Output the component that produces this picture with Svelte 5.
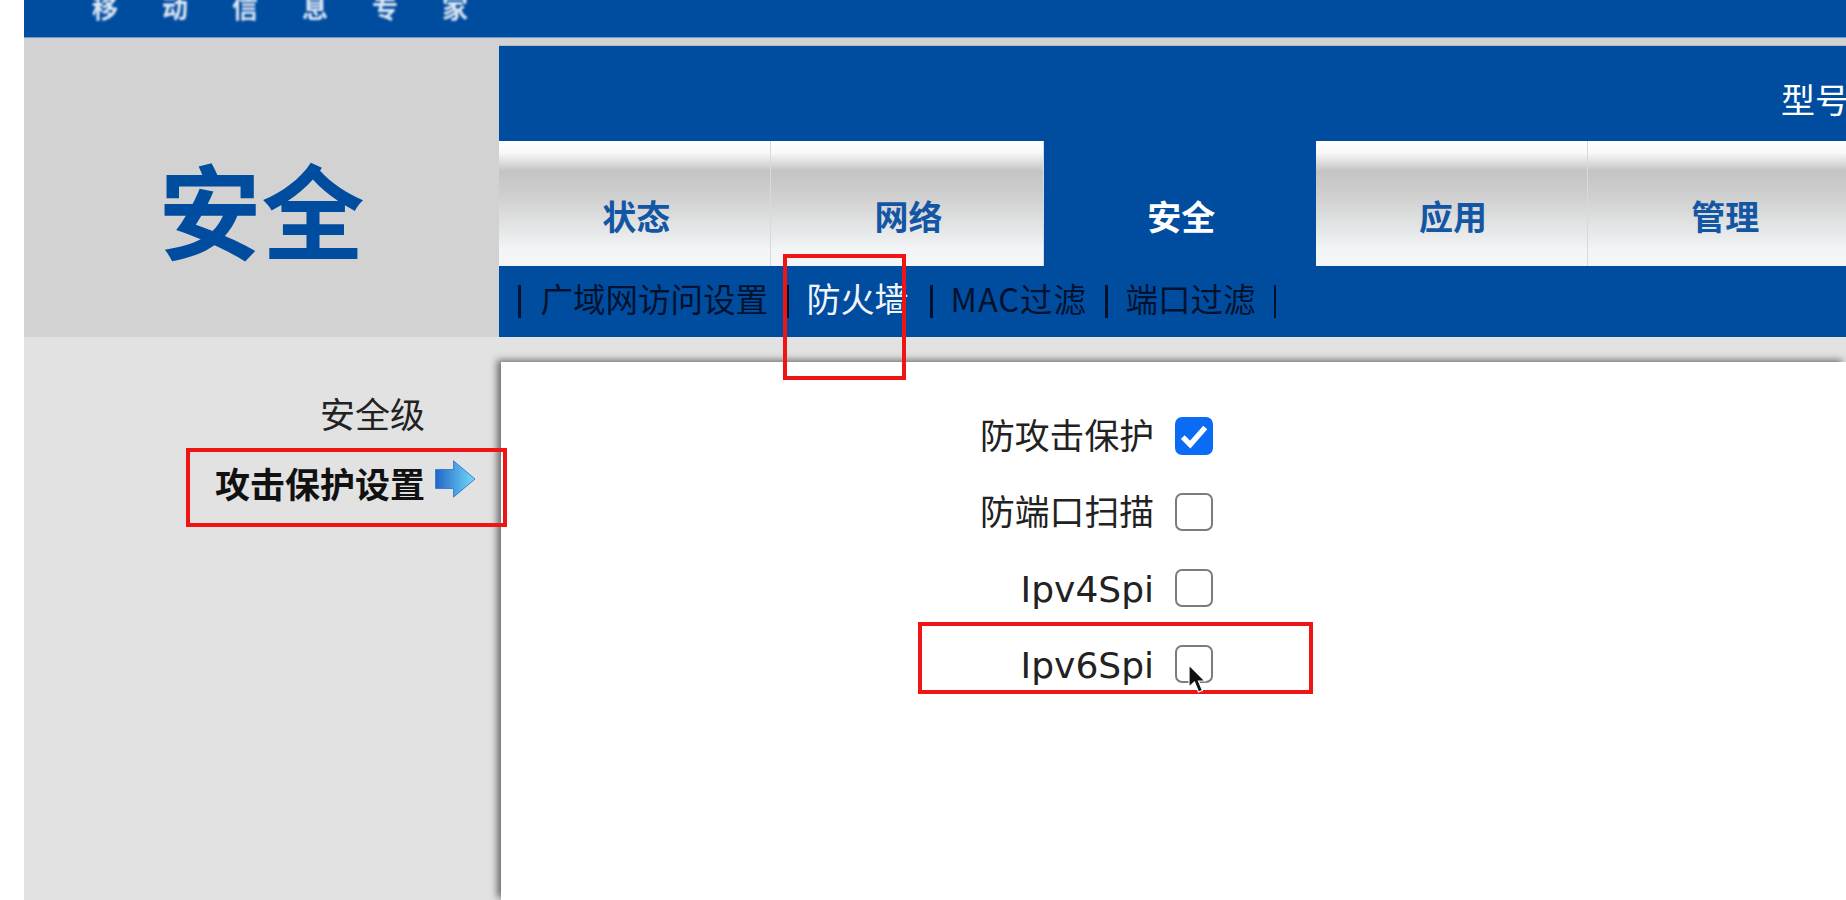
<script>
  const brandChars = ['移', '动', '信', '息', '专', '家'];
  const tabs = [
    { name: '状态' },
    { name: '网络' },
    { name: '安全', active: true },
    { name: '应用' },
    { name: '管理' }
  ];
  const subLinks = [
    { name: '广域网访问设置' },
    { name: '防火墙', active: true },
    { name: 'MAC过滤', wide: true },
    { name: '端口过滤' }
  ];
  const options = [
    { label: '防攻击保护', checked: true },
    { label: '防端口扫描', checked: false },
    { label: 'Ipv4Spi', checked: false, latin: true },
    { label: 'Ipv6Spi', checked: false, latin: true }
  ];
</script>

<div class="page">
  <header class="topbar">
    {#each brandChars as ch}
      <span>{ch}</span>
    {/each}
  </header>

  <section class="head">
    <h1 class="title">安全</h1>
    <div class="head-main">
      <div class="model">型号</div>
      <nav class="tabs">
        {#each tabs as tab}
          <div class="tab" class:active={tab.active}>{tab.name}</div>
        {/each}
      </nav>
      <nav class="subnav">
        <i class="sep first"></i>
        {#each subLinks as link}
          <span class="sublink" class:active={link.active} class:wide={link.wide}>{link.name}</span>
          <i class="sep"></i>
        {/each}
      </nav>
    </div>
  </section>

  <section class="body">
    <aside class="side">
      <div class="side-item">安全级</div>
      <div class="side-item current">
        攻击保护设置
        <svg class="arrow" width="41" height="38" viewBox="0 0 41 38">
          <defs>
            <linearGradient id="arrowFill" x1="0" x2="1" y1="0" y2="0">
              <stop offset="0" stop-color="#2166c8" />
              <stop offset="1" stop-color="#74dcf8" />
            </linearGradient>
          </defs>
          <path d="M0.5 9.5H18.5V0.8L40 19 18.5 37.2V28.5H0.5Z" fill="url(#arrowFill)" stroke="#3d7fd0" />
        </svg>
      </div>
    </aside>
    <main class="content">
      <div class="form">
        {#each options as opt}
          <span class="label" class:latin={opt.latin}>{opt.label}</span>
          <span class="box" class:on={opt.checked}>
            {#if opt.checked}
              <svg width="30" height="26" viewBox="0 0 28 24">
                <path d="M3.5 13L10.5 20 24.5 4" fill="none" stroke="#fff" stroke-width="5" />
              </svg>
            {/if}
          </span>
        {/each}
      </div>
    </main>
  </section>

  <!-- annotation boxes drawn over the screenshot -->
  <div class="mark mark-nav"></div>
  <div class="mark mark-side"></div>
  <div class="mark mark-row"></div>

  <svg class="cursor" width="18" height="30" viewBox="0 0 18 30">
    <path d="M1 1V23L6.5 18 10.5 28 14.5 26.4 10.5 17H17Z" fill="#111" stroke="#fff" stroke-width="1.2" />
  </svg>
</div>

<style>
  :global(body) {
    margin: 0;
    background: #fff;
  }

  .page {
    position: relative;
    width: 1846px;
    height: 900px;
    overflow: hidden;
    box-sizing: border-box;
    padding-left: 24px;
    font-family: "DejaVu Sans", "Noto Sans CJK SC", sans-serif;
  }

  .topbar {
    height: 38px;
    box-sizing: border-box;
    background: #004da0;
    border-bottom: 1px solid #6e9ad0;
    overflow: hidden;
    display: flex;
    gap: 44px;
    padding-left: 68px;
    font: bold 26px/26px "Noto Sans CJK SC", sans-serif;
    color: #dfe9f5;
  }

  .topbar span {
    margin-top: -6px;
    filter: blur(0.8px);
  }

  .head {
    display: flex;
    height: 299px;
    background: #d2d2d2;
  }

  .title {
    flex: none;
    width: 475px;
    margin: 0;
    text-align: center;
    font: bold 103px/340px "Noto Sans CJK SC", sans-serif;
    color: #004da0;
  }

  .head-main {
    flex: none;
    width: 1400px;
    margin-top: 7px;
    background: #004da0;
    border-top: 1px solid #b5bcc6;
    display: flex;
    flex-direction: column;
  }

  .model {
    height: 95px;
    padding-left: 1282px;
    font: 34px/106px "Noto Sans CJK SC", sans-serif;
    color: #fff;
  }

  .tabs {
    display: flex;
    height: 125px;
  }

  .tab {
    flex: none;
    width: 272.3px;
    box-sizing: border-box;
    padding-left: 3px;
    border-right: 1px solid #d3dbe2;
    background: linear-gradient(#ffffff 0, #f8f8f8 12px, #c4c4c4 30px, #cfcfcf 55px, #f3f5f6 110px);
    color: #1356a3;
    font: bold 34px/150px "Noto Sans CJK SC", sans-serif;
    text-align: center;
  }

  .tab.active {
    background: #004da0;
    border-right: 0;
    color: #fff;
  }

  .subnav {
    height: 70px;
    display: flex;
    align-items: center;
    padding-left: 19px;
    gap: 18px;
    font: 32.5px/70px "Noto Sans CJK SC", sans-serif;
    color: #02122e;
  }

  .sublink {
    margin-top: -7px;
  }

  .sublink.wide {
    letter-spacing: 1px;
  }

  .sublink.active {
    color: #f1f5fb;
    font-size: 34px;
    margin-right: 3.5px;
  }

  .sep {
    width: 2.5px;
    height: 33px;
    background: #02122e;
  }

  .sep.first {
    margin-right: 2px;
  }

  .body {
    display: flex;
    height: 563px;
    background: #e2e2e2;
  }

  .side {
    width: 477px;
    flex: none;
    box-sizing: border-box;
    padding-top: 55px;
    font-size: 35px;
    color: #222;
  }

  .side-item {
    height: 70px;
    box-sizing: border-box;
    line-height: 48px;
    text-align: right;
    padding-right: 76px;
    position: relative;
  }

  .side-item.current {
    font-weight: bold;
    color: #111;
  }

  .arrow {
    position: absolute;
    right: 25px;
    top: -2px;
  }

  .content {
    flex: 1;
    margin-top: 25px;
    background: #fff;
    box-shadow: -4px -2px 7px #6e6e6e;
  }

  .form {
    display: grid;
    grid-template-columns: 653px 38px;
    column-gap: 21px;
    row-gap: 38px;
    padding-top: 55px;
    align-items: center;
  }

  .label {
    height: 38px;
    text-align: right;
    font-size: 34.8px;
    line-height: 40px;
    color: #222;
    white-space: nowrap;
  }

  .label.latin {
    font-size: 36px;
    line-height: 42px;
  }

  .box {
    width: 38px;
    height: 38px;
    box-sizing: border-box;
    border: 2.5px solid #7c7c7c;
    border-radius: 7px;
    background: #fff;
    display: flex;
    align-items: center;
    justify-content: center;
  }

  .box.on {
    background: #0a6cf5;
    border-color: #0a6cf5;
  }

  .mark {
    position: absolute;
    box-sizing: border-box;
    border: 4px solid #f01515;
    pointer-events: none;
  }

  .mark-nav {
    left: 783px;
    top: 254px;
    width: 123px;
    height: 126px;
  }

  .mark-side {
    left: 186px;
    top: 448px;
    width: 321px;
    height: 79px;
  }

  .mark-row {
    left: 918px;
    top: 622px;
    width: 395px;
    height: 72px;
  }

  .cursor {
    position: absolute;
    left: 1188px;
    top: 664px;
  }
</style>
